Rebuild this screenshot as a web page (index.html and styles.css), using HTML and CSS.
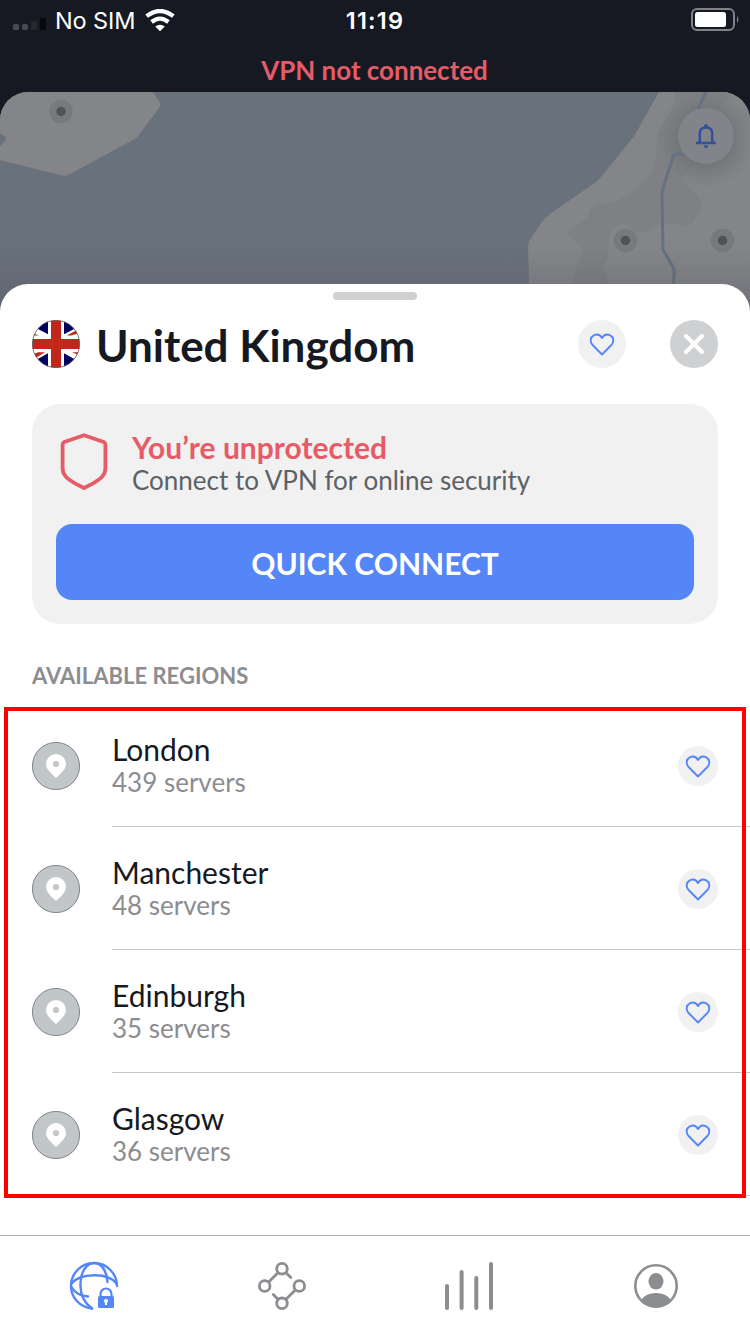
FILE: index.html
```html
<!DOCTYPE html>
<html lang="en">
<head>
<meta charset="utf-8">
<title>United Kingdom</title>
<link rel="stylesheet" href="styles.css">
</head>
<body>
<svg class="defs" width="0" height="0" aria-hidden="true">
  <symbol id="heart" viewBox="0 0 26 24"><path d="M13 22.500 L3.600 13 C.600 9.800 1.300 5 4.800 3.300 C8 1.900 11.300 3 13 6 C14.700 3 18 1.900 21.200 3.300 C24.700 5 25.400 9.800 22.400 13 Z" fill="none" stroke="#5586f7" stroke-width="1.900" stroke-linejoin="round"/></symbol>
  <symbol id="pin" viewBox="0 0 48 48"><circle cx="24" cy="24" r="23.6" fill="#c1c6c9" stroke="#777b80" stroke-width=".9"/><path d="M24 36 C20 32 14 27.5 14 22 A10 10 0 0 1 34 22 C34 27.5 28 32 24 36Z" fill="#fff"/><circle cx="24" cy="22" r="3.1" fill="#c1c6c9"/></symbol>
</svg>
<div class="screen">
  <header class="top">
    <div class="status">
      <div class="carrier">
        <svg width="34" height="14" viewBox="0 0 34 14"><rect x="0" y="7" width="6" height="6" rx="1.5" fill="#474a52"/><rect x="9" y="7" width="6" height="6" rx="1.5" fill="#474a52"/><rect x="18" y="4" width="6" height="9" rx="1.5" fill="#26282d"/><rect x="27" y="1" width="6" height="12" rx="1.5" fill="#07080a"/></svg>
        <span class="sim">No SIM</span>
        <svg class="wifi" width="30" height="23" viewBox="0 0 30 23"><g fill="none" stroke="#fff" stroke-width="4.2"><path d="M1.6 7.2 Q15-3.2 28.4 7.2"/><path d="M6.6 13 Q15 6.2 23.4 13"/></g><path d="M10.2 17.6 Q15 13.8 19.8 17.6 L15 22.2Z" fill="#fff"/></svg>
      </div>
      <div class="clock">11:19</div>
      <svg class="battery" width="49" height="24" viewBox="0 0 49 24"><rect x="1" y="1" width="42" height="21" rx="5" fill="none" stroke="#808288" stroke-width="2"/><rect x="4" y="4" width="31" height="15" rx="2.5" fill="#fff"/><path d="M46 8 q3 3.5 0 7z" fill="#808288"/></svg>
    </div>
    <div class="vpn">VPN not connected</div>
  </header>
  <div class="map">
    <svg width="750" height="222" viewBox="0 92 750 222">
      <defs>
        <linearGradient id="shade" x1="0" y1="0" x2="0" y2="1"><stop offset="0" stop-color="#4a4b58" stop-opacity="0"/><stop offset="1" stop-color="#4a4b58" stop-opacity=".35"/></linearGradient>
        <radialGradient id="glow"><stop offset=".5" stop-color="#6c6e72" stop-opacity=".7"/><stop offset="1" stop-color="#747679" stop-opacity="0"/></radialGradient>
      </defs>
      <rect y="92" width="750" height="222" fill="#69717d"/>
      <path d="M0 92H153L159 101Q161 104 159 108L139 135Q137 138 133 140L70 174Q65 177 60 175L0 160Z" fill="#838588"/>
      <path d="M0 134Q6 136 6 139Q5 142 0 146Z" fill="#69717d"/>
      <path d="M659 92L637 131Q635 136 631 140L600 178Q597 182 593 184L550 214Q544 218 541 223L531 238Q528 242 528 247L530 314H750V92Z" fill="#838588"/>
      <path d="M674 92V104C670 118 659 125 657 140C656 155 656 170 645 180C633 195 616 203 600 204C590 205 588 216 586 219L570 230Q567 233 568 236Q580 242 583 250C584 260 573 267 573 284V314H609V284C607 276 603 268 604 264C613 251 605 243 612 231C617 222 628 222 634 230C644 236 652 230 660 224C672 221 680 228 691 225C695 217 704 210 700 200C698 188 682 187 683 177C684 169 691 169 696 160L710 120L730 96L735 92Z" fill="#7e8083"/>
      <circle cx="706" cy="139" r="50" fill="url(#glow)"/>
      <path d="M706 92L698 109M688 154H678Q674 154 673 157L663 188Q662 191 662 196L663 249Q663 251 665 253L673 267Q675 271 674 276L672 314" fill="none" stroke="#657180" stroke-width="3"/>
      <g fill="#77797d"><circle cx="61" cy="111.500" r="11.700"/><circle cx="625.500" cy="240.500" r="11.700"/><circle cx="722.500" cy="240.500" r="11.700"/></g>
      <g fill="#505257"><circle cx="61" cy="111.500" r="4.700"/><circle cx="625.500" cy="240.500" r="4.700"/><circle cx="722.500" cy="240.500" r="4.700"/></g>
      <rect y="246" width="750" height="68" fill="url(#shade)"/>
      <circle cx="706" cy="136" r="28" fill="#838489"/>
      <g transform="translate(696 124)"><path d="M0 19H20M3.800 18.500V9Q3.800 3.400 10 3.400Q16.200 3.400 16.200 9V18.500" fill="none" stroke="#34509b" stroke-width="2.500"/><path d="M8 4V2A2 2 0 0 1 12 2V4ZM7.700 21.500H12.300Q12 24 10 24Q8 24 7.700 21.500ZM.2 19.500L4 15.500V19.500ZM19.800 19.500L16 15.500V19.500Z" fill="#34509b"/></g>
    </svg>
  </div>
  <main class="sheet">
    <div class="grabber"></div>
    <div class="heading">
      <svg class="flag" width="48" height="48" viewBox="0 0 48 48"><defs><clipPath id="disc"><circle cx="24" cy="24" r="23.700"/></clipPath></defs><g clip-path="url(#disc)"><rect width="48" height="48" fill="#fff"/><path d="M16 14.300L4 8V0H16ZM32 14.300L44 8V0H32ZM16 33.300L4 40V48H16ZM32 33.300L44 40V48H32Z" fill="#00005f"/><path d="M0 13L7 15.500H0ZM34.700 15.500L46 9.500L48 13L39 15.500ZM0 35L6 32.300H13L3 38.500ZM40 32.300H48V35.500Z" fill="#c1271a"/><path d="M19 0H29V19H48V29H29V48H19V29H0V19H19Z" fill="#c1271a"/></g><circle cx="24" cy="24" r="23.600" fill="none" stroke="#555" stroke-width=".8"/></svg>
      <h1>United Kingdom</h1>
      <button class="fav large" aria-label="Favourite"><svg width="26" height="24"><use href="#heart"/></svg></button>
      <button class="close" aria-label="Close"><svg width="22" height="22" viewBox="0 0 22 22"><path d="M3 3L19 19M19 3L3 19" stroke="#fff" stroke-width="4" stroke-linecap="round"/></svg></button>
    </div>
    <section class="card">
      <div class="notice">
        <svg class="shield" width="48" height="58" viewBox="0 0 48 58"><path d="M24 2.200L43 8.700Q45.400 9.600 45.400 12V35Q45.400 42 39 46.500Q33 51 24 55Q15 51 9 46.500Q2.600 42 2.600 35V12Q2.600 9.600 5 8.700Z" fill="none" stroke="#e55c68" stroke-width="3.800" stroke-linejoin="round"/></svg>
        <div><div class="warn">You’re unprotected</div><div class="hint">Connect to VPN for online security</div></div>
      </div>
      <button class="connect">QUICK CONNECT</button>
    </section>
    <h2>AVAILABLE REGIONS</h2>
    <ul class="regions">
      <li><svg class="pin" width="48" height="48"><use href="#pin"/></svg><div class="info"><div class="text"><div class="city">London</div><div class="count">439 servers</div></div><button class="fav" aria-label="Favourite"><svg width="26" height="24"><use href="#heart"/></svg></button></div></li>
      <li><svg class="pin" width="48" height="48"><use href="#pin"/></svg><div class="info"><div class="text"><div class="city">Manchester</div><div class="count">48 servers</div></div><button class="fav" aria-label="Favourite"><svg width="26" height="24"><use href="#heart"/></svg></button></div></li>
      <li><svg class="pin" width="48" height="48"><use href="#pin"/></svg><div class="info"><div class="text"><div class="city">Edinburgh</div><div class="count">35 servers</div></div><button class="fav" aria-label="Favourite"><svg width="26" height="24"><use href="#heart"/></svg></button></div></li>
      <li><svg class="pin" width="48" height="48"><use href="#pin"/></svg><div class="info"><div class="text"><div class="city">Glasgow</div><div class="count">36 servers</div></div><button class="fav" aria-label="Favourite"><svg width="26" height="24"><use href="#heart"/></svg></button></div></li>
    </ul>
  </main>
  <nav class="tabs">
    <svg width="50" height="50" viewBox="0 0 50 50"><g fill="none" stroke="#5586f7" stroke-width="2.400" stroke-linecap="round"><path d="M23 47.500C10 46 2 36 2 25A23 23 0 0 1 25 2C38 2 48 13 48 25"/><path d="M23 47.500C14 41 11 31 11.500 22C12 10 18 2 25 2C33 2 38 11 38.500 21"/><path d="M2.500 22.500C11 12 39 11 47.500 22.500M2.500 26C6 32 11 35 19 35.500"/></g><path d="M31.500 36V33A5.500 5.500 0 0 1 42.500 33V36" fill="none" stroke="#5586f7" stroke-width="2.200"/><rect x="29" y="35" width="16" height="12" rx="1.500" fill="#5586f7"/><circle cx="37" cy="40" r="2" fill="#fff"/><path d="M36 40H38V44H36Z" fill="#fff"/></svg>
    <svg class="mesh" width="50" height="50" viewBox="0 0 50 50" fill="none" stroke="#8c8d91" stroke-width="2.800" stroke-linecap="round"><circle cx="25" cy="7.700" r="5.300"/><circle cx="7.700" cy="25" r="5.300"/><circle cx="42.300" cy="25" r="5.300"/><circle cx="25" cy="42.300" r="5.300"/><path d="M21 11.700L11.700 21M29 11.700L33.800 16.500M38.300 29L29 38.300M21 38.300L16.300 33.500"/></svg>
    <svg width="50" height="50" viewBox="0 0 50 50" stroke="#8c8d91" stroke-width="4" stroke-linecap="round"><path d="M3 25V47M17.600 11V47M32.300 17V47M47 3V47"/></svg>
    <svg width="50" height="50" viewBox="0 0 50 50"><circle cx="25" cy="25" r="20.700" fill="none" stroke="#8c8d91" stroke-width="2.600"/><ellipse cx="25" cy="20.300" rx="7.500" ry="8.300" fill="#8c8d91"/><path d="M10 39Q15 32 25 32Q35 32 40 39Q34 46 25 46Q16 46 10 39Z" fill="#8c8d91"/></svg>
  </nav>
  <div class="highlight"></div>
</div>
</body>
</html>
```
FILE: styles.css
```css
* { box-sizing: border-box; }
body { margin: 0; font-family: Lato, "Liberation Sans", sans-serif; background: #fff; }
svg { display: block; flex: none; }
.defs { position: absolute; }
button { border: 0; padding: 0; font-family: inherit; }
.screen { position: relative; width: 750px; height: 1334px; overflow: hidden; background: #161922; display: flex; flex-direction: column; }
.top { height: 92px; flex: none; color: #fff; }
.status { height: 55px; display: grid; grid-template-columns: 1fr auto 1fr; font-family: Inter, sans-serif; font-size: 23.5px; line-height: 28px; padding: 7px 10px 0 13px; }
.carrier { display: flex; }
.carrier > svg:first-child { margin-top: 10px; }
.sim { margin-left: 8px; letter-spacing: -.1px; width: 80px; white-space: nowrap; }
.wifi { margin: 2px 0 0 10px; }
.clock { font-weight: 600; letter-spacing: 1.2px; margin-right: 3px; }
.battery { justify-self: end; margin-top: 1px; }
.vpn { color: #e55c68; font-size: 26px; line-height: 31px; font-weight: 700; text-align: center; letter-spacing: -.03px; padding-right: 1px; }
.map { height: 222px; flex: none; overflow: hidden; border-radius: 28px 28px 0 0; }
.sheet { position: relative; margin-top: -30px; height: 951px; flex: none; background: #fff; border-radius: 28px 28px 0 0; padding-top: 8px; }
.grabber { width: 84px; height: 8px; border-radius: 4px; background: #cfd0d2; margin: 0 auto; }
.heading { display: flex; align-items: flex-start; padding: 20px 32px 0; height: 104px; }
h1 { margin: -1px auto 0 16px; color: #161922; font-size: 44px; line-height: 52px; font-weight: 700; white-space: nowrap; }
.fav, .close { display: flex; align-items: center; justify-content: center; flex: none; border-radius: 50%; }
.fav { width: 40px; height: 40px; background: #f1f1f2; }
.fav.large { width: 48px; height: 48px; margin-right: 44px; }
.close { width: 48px; height: 48px; background: #cfd0d2; }
.card { margin: 0 32px; height: 220px; background: #f1f1f1; border-radius: 28px; padding: 24px; }
.notice { display: flex; height: 96px; }
.shield { margin: 5px 0 0 4px; }
.notice > div { margin-left: 24px; padding-top: 1px; }
.warn { color: #e55c68; font-size: 30px; line-height: 36px; font-weight: 700; }
.hint { color: #5c6166; font-size: 26px; line-height: 31px; }
.connect { width: 100%; height: 76px; border-radius: 16px; background: #5586f7; color: #fff; font-size: 30px; font-weight: 700; padding-top: 1px; }
h2 { margin: 0; padding: 39px 32px 0; height: 80px; font-size: 22px; line-height: 26px; font-weight: 700; color: #8c8d91; }
.regions { list-style: none; margin: 0; padding: 0; }
.regions li { display: flex; height: 123px; padding-left: 32px; }
.pin { margin: 38px 32px 0 0; }
.info { flex: 1; display: flex; justify-content: space-between; border-bottom: 1px solid #c1c6c9; padding: 27px 32px 0 0; }
.info .fav { margin-top: 15px; }
.city { color: #161922; font-size: 30px; line-height: 36px; }
.count { color: #8c8d91; font-size: 26px; line-height: 31px; }
.tabs { flex: 1; background: #fff; border-top: 1px solid #b0b1b4; display: grid; grid-template-columns: repeat(4, 1fr); justify-items: center; padding-top: 25px; }
.mesh { margin-left: 2px; }
.highlight { position: absolute; left: 4px; top: 707px; width: 742px; height: 491px; border: 4px solid #f00; pointer-events: none; }
```
